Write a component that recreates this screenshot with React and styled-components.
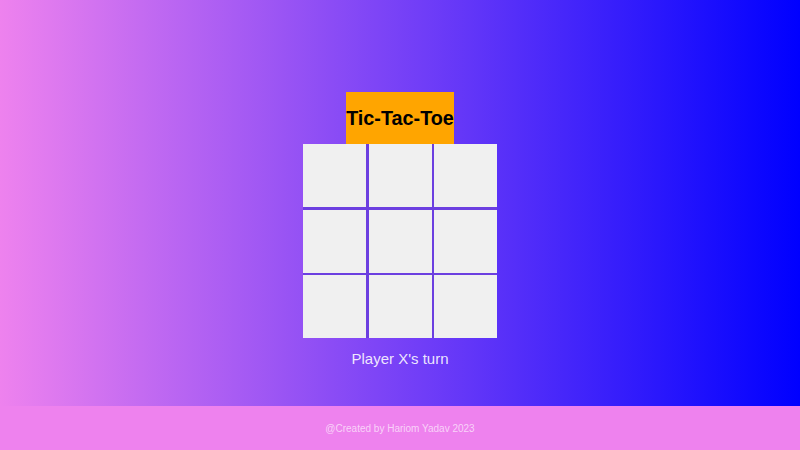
import React, { useState } from "react";
import styled, { createGlobalStyle } from "styled-components";

const Global = createGlobalStyle`
  html, body { margin: 0; padding: 0; }
  body { font-family: "Liberation Sans", Arial, sans-serif; }
`;

const Page = styled.div`
  width: 100vw;
  height: 100vh;
  display: flex;
  flex-direction: column;
  overflow: hidden;
`;

const Main = styled.main`
  flex: 1;
  background: linear-gradient(to right, #ee82ee, #0000ff);
  display: flex;
  flex-direction: column;
  align-items: center;
  padding-top: 92px;
  box-sizing: border-box;
`;

const Title = styled.h1`
  margin: 0;
  background: #ffa500;
  color: #000;
  font-size: 19.8px;
  font-weight: 700;
  height: 52px;
  line-height: 52px;
  padding: 0;
`;

const Board = styled.div`
  display: grid;
  grid-template-columns: repeat(3, 63px);
  grid-template-rows: repeat(3, 63px);
  gap: 2.5px;
  background: #6c3fe0;
`;

const Cell = styled.button`
  border: none;
  padding: 0;
  margin: 0;
  background: #f0f0f0;
  font-family: inherit;
  font-size: 32px;
  font-weight: 700;
  cursor: pointer;
`;

const Status = styled.p`
  margin: 12px 0 0;
  color: rgba(255, 255, 255, 0.88);
  font-size: 15px;
  line-height: 18px;
`;

const Footer = styled.footer`
  height: 44px;
  flex: none;
  background: #ee82ee;
  display: flex;
  align-items: center;
  justify-content: center;
  color: rgba(255, 255, 255, 0.65);
  font-size: 10px;
`;

export default function App() {
  const [cells, setCells] = useState(Array(9).fill(null));
  const [xNext, setXNext] = useState(true);
  const play = (i) => {
    if (cells[i]) return;
    const n = cells.slice();
    n[i] = xNext ? "X" : "O";
    setCells(n);
    setXNext(!xNext);
  };
  return (
    <Page>
      <Global />
      <Main>
        <Title>Tic-Tac-Toe</Title>
        <Board>
          {cells.map((c, i) => (
            <Cell key={i} onClick={() => play(i)}>
              {c}
            </Cell>
          ))}
        </Board>
        <Status>Player {xNext ? "X" : "O"}'s turn</Status>
      </Main>
      <Footer>@Created by Hariom Yadav 2023</Footer>
    </Page>
  );
}
